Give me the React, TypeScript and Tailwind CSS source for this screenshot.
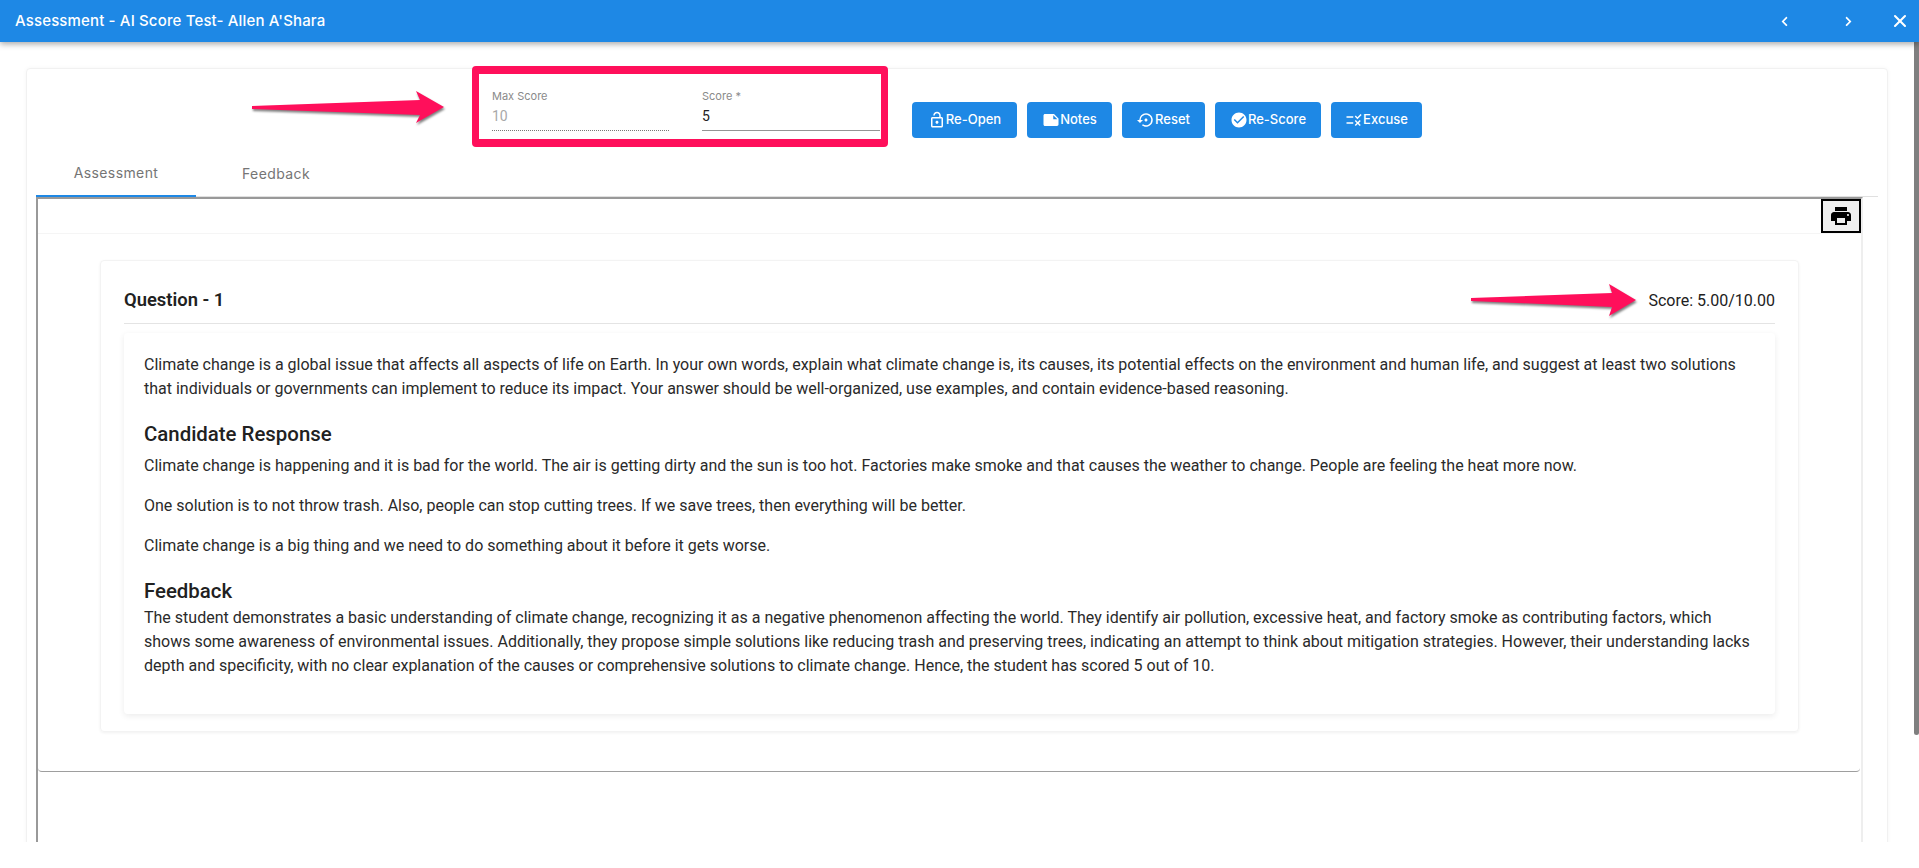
import React from 'react';
import { MdOutlineLockOpen, MdNote, MdSettingsBackupRestore, MdCheckCircle, MdRule, MdPrint } from 'react-icons/md';
import { FaChevronLeft, FaChevronRight } from 'react-icons/fa';
import { X } from 'lucide-react';

const poppins = { fontFamily: 'Inter, "Open Sans", sans-serif' };

const actions = [
  { label: 'Re-Open', width: 'w-[105px]', icon: <MdOutlineLockOpen className="h-[18px] w-[18px]" /> },
  { label: 'Notes', width: 'w-[85px]', icon: <MdNote className="h-[18px] w-[18px]" /> },
  { label: 'Reset', width: 'w-[83px]', icon: <MdSettingsBackupRestore className="h-[18px] w-[18px]" /> },
  { label: 'Re-Score', width: 'w-[106px]', icon: <MdCheckCircle className="h-[18px] w-[18px]" /> },
  { label: 'Excuse', width: 'w-[91px]', icon: <MdRule className="h-[18px] w-[18px]" /> },
];

// pink call-out arrow from the annotated screenshot
const CalloutArrow = ({ className, d, box }: { className: string; d: string; box: string }) => (
  <svg viewBox={box} className={`absolute overflow-visible drop-shadow-[1px_2px_1px_rgba(0,0,0,0.5)] ${className}`}>
    <path d={d} fill="#ff0f5b" />
  </svg>
);

const App: React.FC = () => {
  return (
    <div className="relative h-[868px] w-[1919px] overflow-hidden bg-white" style={{ fontFamily: 'Roboto, sans-serif' }}>
      <header className="relative z-10 flex h-[42px] items-center justify-between bg-[#1e88e5] pl-[15px] text-white shadow-[0_2px_6px_rgba(0,0,0,0.35)]">
        <span className="text-[15px] font-medium tracking-[0.15px]" style={poppins}>Assessment - AI Score Test- Allen A'Shara</span>
        <div className="flex items-center">
          <FaChevronLeft className="mr-[53px] h-[11px] w-[11px]" />
          <FaChevronRight className="mr-[36px] h-[11px] w-[11px]" />
          <X className="mr-[9px] h-[20px] w-[20px]" strokeWidth={2.5} />
        </div>
      </header>

      <div className="absolute right-0 top-[42px] h-[693px] w-[5px] rounded-b-sm bg-[#7f7f7f]" />

      <main className="h-[800px] overflow-hidden pl-[26px] pr-[31px] pt-[26px]">
        <div className="h-[900px] rounded border border-[#f1f1f1] shadow-[0_0_4px_rgba(0,0,0,0.04)]">
          {/* score fields and actions */}
          <div className="flex h-[80px] pl-[465px]">
            <div className="w-[177px] pt-[20px]">
              <div className="text-[11px] leading-[14px] text-[#8a8a8a]" style={poppins}>Max Score</div>
              <div className="mt-[3px] h-[25px] border-b border-dotted border-[#777777] text-[14px] leading-[20px] text-[#a8a8a8]">10</div>
            </div>
            <div className="ml-[33px] w-[178px] pt-[20px]">
              <div className="text-[11px] leading-[14px] text-[#8a8a8a]" style={poppins}>Score *</div>
              <div className="mt-[3px] h-[25px] border-b border-[#949494] text-[14px] leading-[20px] text-[#222]">5</div>
            </div>
            <div className="ml-[32px] flex gap-[10px] pt-[33px]">
              {actions.map((a) => (
                <button
                  key={a.label}
                  type="button"
                  className={`flex h-[36px] items-center justify-center rounded bg-[#1e88e5] text-[13px] font-medium text-white ${a.width}`}
                  style={poppins}
                >
                  {a.icon}
                  {a.label}
                </button>
              ))}
            </div>
          </div>

          {/* tabs */}
          <div className="ml-[9px] mr-[9px] flex h-[48px] border-b border-[#e0e0e0] text-[14px] tracking-[0.4px] text-[#757575]" style={poppins}>
            <div className="flex h-[48px] w-[160px] items-center justify-center border-b-2 border-[#1e88e5] pt-[1px]">Assessment</div>
            <div className="flex h-[48px] w-[160px] items-center justify-center pt-[1px]">Feedback</div>
          </div>

          {/* embedded assessment frame */}
          <div className="ml-[9px] h-[700px] w-[1827px] border-2 border-[#eeeeee] border-l-[#999999] border-t-[#999999]">
            <div className="flex h-[35px] justify-end border-b border-[#f5f5f5]">
              <button type="button" className="flex h-[34px] w-[40px] items-center justify-center border-2 border-black bg-[#efefef]">
                <MdPrint className="h-[24px] w-[24px] text-black" />
              </button>
            </div>
            <div className="mr-[1px] h-[538px] rounded-b border-b-[1.5px] border-[#9e9e9e] px-[62px] pt-[26px]">
              <div className="h-[472px] w-[1699px] rounded border border-[#f3f3f3] px-[23px] shadow-[0_1px_3px_rgba(0,0,0,0.06)]">
                <div className="flex h-[63px] items-center justify-between border-b border-[#e4e4e4] pt-[17px]">
                  <h2 className="mb-[2px] text-[18.4px] font-semibold text-[#212121]">Question - 1</h2>
                  <span className="mt-[1px] text-[16px] text-[#212121]">Score: 5.00/10.00</span>
                </div>
                <div className="mt-[9px] h-[381px] rounded px-[20px] pt-[20px] text-[16px] leading-[24px] text-[#2a2a2a] shadow-[0_2px_6px_rgba(0,0,0,0.08)]">
                  <p>Climate change is a global issue that affects all aspects of life on Earth. In your own words, explain what climate change is, its causes, its potential effects on the environment and human life, and suggest at least two solutions that individuals or governments can implement to reduce its impact. Your answer should be well-organized, use examples, and contain evidence-based reasoning.</p>
                  <h3 className="mt-[17px] text-[20.4px] font-medium leading-[32px] text-[#212121]">Candidate Response</h3>
                  <p className="mt-[4px]">Climate change is happening and it is bad for the world. The air is getting dirty and the sun is too hot. Factories make smoke and that causes the weather to change. People are feeling the heat more now.</p>
                  <p className="mt-[16px]">One solution is to not throw trash. Also, people can stop cutting trees. If we save trees, then everything will be better.</p>
                  <p className="mt-[16px]">Climate change is a big thing and we need to do something about it before it gets worse.</p>
                  <h3 className="mt-[18px] text-[20.4px] font-medium leading-[30px] text-[#212121]">Feedback</h3>
                  <p>The student demonstrates a basic understanding of climate change, recognizing it as a negative phenomenon affecting the world. They identify air pollution, excessive heat, and factory smoke as contributing factors, which shows some awareness of environmental issues. Additionally, they propose simple solutions like reducing trash and preserving trees, indicating an attempt to think about mitigation strategies. However, their understanding lacks depth and specificity, with no clear explanation of the causes or comprehensive solutions to climate change. Hence, the student has scored 5 out of 10.</p>
                </div>
              </div>
            </div>
          </div>
        </div>
      </main>

      {/* annotations drawn over the page */}
      <div className="pointer-events-none absolute left-[472px] top-[66px] h-[81px] w-[416px] rounded-[4px] border-x-[7px] border-y-[8px] border-[#ff0f5b]" />
      <CalloutArrow box="0 0 192 32" d="M0 15 L168 9 L164 0 L192 16 L164 32 L168 24 L0 18 Z" className="left-[252px] top-[91px] h-[32px] w-[192px]" />
      <CalloutArrow box="0 0 165 32" d="M0 14 L141 9 L138 0 L165 16 L138 32 L141 23 L0 17 Z" className="left-[1471px] top-[284px] h-[32px] w-[165px]" />
    </div>
  );
};

export default App;
